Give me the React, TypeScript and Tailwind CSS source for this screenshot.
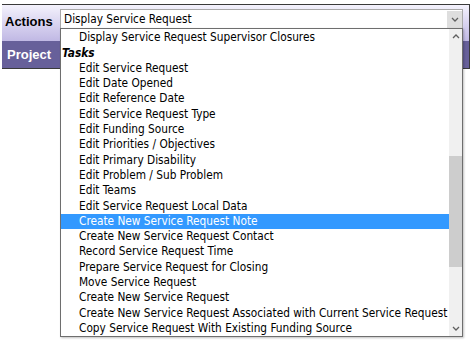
import React from 'react';

const ITEMS: { label: string; kind?: 'group' | 'active' }[] = [
  { label: 'Display Service Request Supervisor Closures' },
  { label: 'Tasks', kind: 'group' },
  { label: 'Edit Service Request' },
  { label: 'Edit Date Opened' },
  { label: 'Edit Reference Date' },
  { label: 'Edit Service Request Type' },
  { label: 'Edit Funding Source' },
  { label: 'Edit Priorities / Objectives' },
  { label: 'Edit Primary Disability' },
  { label: 'Edit Problem / Sub Problem' },
  { label: 'Edit Teams' },
  { label: 'Edit Service Request Local Data' },
  { label: 'Create New Service Request Note', kind: 'active' },
  { label: 'Create New Service Request Contact' },
  { label: 'Record Service Request Time' },
  { label: 'Prepare Service Request for Closing' },
  { label: 'Move Service Request' },
  { label: 'Create New Service Request' },
  { label: 'Create New Service Request Associated with Current Service Request' },
  { label: 'Copy Service Request With Existing Funding Source' },
];

const Chevron = ({ up }: { up?: boolean }) => (
  <svg width="8" height="5" viewBox="0 0 8 5" className={up ? 'rotate-180' : ''}>
    <path d="M1 1 L4 4 L7 1" fill="none" stroke="#606060" strokeWidth="1.3" />
  </svg>
);

const App: React.FC = () => {
  return (
    <div className="relative w-[474px] h-[345px] overflow-hidden bg-white font-['DejaVu_Sans_Condensed','DejaVu_Sans',sans-serif] text-black">
      {/* toolbar frame behind the open list */}
      <div className="ml-[2px] mt-[4px] w-[468px] border-t border-r border-[#3a3a3a]">
        <div className="flex h-[36px] bg-gradient-to-b from-[#f4f2fc] to-[#c0b8e4]">
          <div className="w-[58px] pl-[3px] pt-[7px] font-['Liberation_Sans',sans-serif] text-[13px] font-bold">Actions</div>
          <div className="mt-[4px] flex h-[20px] w-[403px] items-center justify-between border border-[#a8a8a8] bg-white pl-[3px]">
            <span className="pt-[1px] text-[11.75px]">Display Service Request</span>
            <div className="flex h-[17px] w-[15px] items-center justify-center bg-[#dedede]">
              <Chevron />
            </div>
          </div>
        </div>
        <div className="flex h-[28px] items-center border-b border-[#3a3a3a] bg-[#67609a] pl-[5px] font-['Liberation_Sans',sans-serif] text-[13px] font-bold text-white">
          Project
        </div>
      </div>

      {/* open dropdown list */}
      <div className="absolute left-[60px] top-[28px] flex h-[309px] w-[403px] border border-[#6e6e6e] bg-white shadow-[1px_1px_2px_rgba(0,0,0,0.25)]">
        <div className="flex-1 pt-[1.5px] text-[11.75px]">
          {ITEMS.map((it) => (
            <div
              key={it.label}
              className={
                it.kind === 'group'
                  ? 'flex h-[15.3px] items-center pl-[1px] font-bold italic'
                  : it.kind === 'active'
                  ? 'flex h-[15.3px] items-center bg-[#3399ff] pl-[18px] text-white'
                  : 'flex h-[15.3px] items-center pl-[18px]'
              }
            >
              <span className="whitespace-nowrap leading-none">{it.label}</span>
            </div>
          ))}
        </div>
        <div className="flex w-[13px] flex-col bg-[#f0f0f0]">
          <div className="flex h-[15px] items-center justify-center">
            <Chevron up />
          </div>
          <div className="mt-[112px] h-[111px] bg-[#cdcdcd]" />
          <div className="flex-1" />
          <div className="flex h-[15px] items-center justify-center">
            <Chevron />
          </div>
        </div>
      </div>
    </div>
  );
};

export default App;
